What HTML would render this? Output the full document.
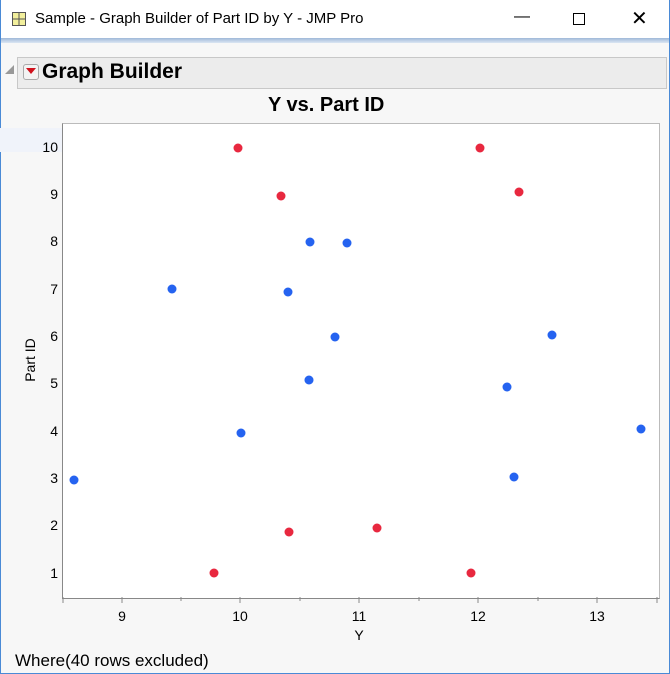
<!DOCTYPE html><html><head><style>
body{margin:0;width:670px;height:674px;overflow:hidden;background:#f7f7f7;font-family:"Liberation Sans",sans-serif;position:relative}
.tb{position:absolute;left:0;top:0;width:670px;height:38px;background:#fff;}
.t{position:absolute;font-size:13px;color:#000}
</style></head><body>
<div class="tb"></div>
<div style="position:absolute;left:0;top:38px;width:670px;height:5px;background:linear-gradient(#9fb8d8,#dbe6f3)"></div>
<div style="position:absolute;left:0;top:0;width:1px;height:674px;background:#4a8ad6"></div>
<div style="position:absolute;right:0;top:0;width:1px;height:674px;background:#4a8ad6"></div>
<div style="position:absolute;left:0;top:673px;width:670px;height:1px;background:#4a8ad6"></div>
<svg style="position:absolute;left:12px;top:12px" width="14" height="14"><rect x="0.5" y="0.5" width="13" height="13" fill="#f2ef9c" stroke="#555"/><path d="M7 1V13M1 7H13" stroke="#555"/></svg>
<div class="t" style="left:35px;top:10px;font-size:15px">Sample - Graph Builder of Part ID by Y - JMP Pro</div>
<div class="t" style="left:514px;top:8px;font-size:16px">&#8212;</div>
<div style="position:absolute;left:573px;top:13px;width:10px;height:10px;border:1px solid #000"></div>
<div class="t" style="left:631px;top:6px;font-size:20px">&#x2715;</div>
<div style="position:absolute;left:17px;top:57px;width:648px;height:30px;background:#ececec;border:1px solid #c8c8c8"></div>
<svg style="position:absolute;left:4px;top:64px" width="12" height="12"><path d="M10 1L10 10L1 10Z" fill="#999"/></svg>
<div style="position:absolute;left:23px;top:64px;width:14px;height:14px;border:1px solid #aaa;border-radius:3px;background:#f3f3f3"></div>
<svg style="position:absolute;left:26px;top:68px" width="10" height="6"><path d="M0 0H10L5 6Z" fill="#d0111c"/></svg>
<div class="t" style="left:42px;top:60px;font-size:21px;font-weight:bold">Graph Builder</div>
<div class="t" style="left:268px;top:94px;font-size:20px;font-weight:bold">Y vs. Part ID</div>
<div style="position:absolute;left:0;top:128px;width:125px;height:24px;background:#f0f3fa"></div>
<div style="position:absolute;left:62px;top:123px;width:596px;height:474px;background:#fff;border:1px solid #bbb;border-bottom:1px solid #888;border-left:1px solid #888"></div>
<svg style="position:absolute;left:0;top:0" width="670" height="674">
<g stroke="#888"><path d="M63 597v6M122 597v6M181 597v4M240 597v6M300 597v4M359 597v6M419 597v4M478 597v6M538 597v4M597 597v6M657 597v6"/></g>
<g font-family="Liberation Sans" font-size="14" fill="#000" text-anchor="middle">
<text x="122" y="621">9</text><text x="240" y="621">10</text><text x="359" y="621">11</text><text x="478" y="621">12</text><text x="597" y="621">13</text>
<text x="359" y="640">Y</text></g>
<g font-family="Liberation Sans" font-size="14" fill="#000" text-anchor="end">
<text x="58" y="152">10</text><text x="58" y="199">9</text><text x="58" y="246">8</text><text x="58" y="294">7</text><text x="58" y="341">6</text><text x="58" y="388">5</text><text x="58" y="436">4</text><text x="58" y="483">3</text><text x="58" y="530">2</text><text x="58" y="578">1</text></g>
<text x="35" y="360" font-family="Liberation Sans" font-size="14" transform="rotate(-90 35 360)" text-anchor="middle">Part ID</text>
<g fill="#e8283f"><circle cx="238" cy="148" r="4.5"/><circle cx="480" cy="148" r="4.5"/><circle cx="281" cy="196" r="4.5"/><circle cx="519" cy="192" r="4.5"/><circle cx="289" cy="532" r="4.5"/><circle cx="377" cy="528" r="4.5"/><circle cx="214" cy="573" r="4.5"/><circle cx="471" cy="573" r="4.5"/></g>
<g fill="#2563f0"><circle cx="310" cy="242" r="4.5"/><circle cx="347" cy="243" r="4.5"/><circle cx="172" cy="289" r="4.5"/><circle cx="288" cy="292" r="4.5"/><circle cx="335" cy="337" r="4.5"/><circle cx="552" cy="335" r="4.5"/><circle cx="309" cy="380" r="4.5"/><circle cx="507" cy="387" r="4.5"/><circle cx="241" cy="433" r="4.5"/><circle cx="641" cy="429" r="4.5"/><circle cx="74" cy="480" r="4.5"/><circle cx="514" cy="477" r="4.5"/></g>
</svg>
<div class="t" style="left:15px;top:651px;font-size:17px">Where(40 rows excluded)</div>
</body></html>
